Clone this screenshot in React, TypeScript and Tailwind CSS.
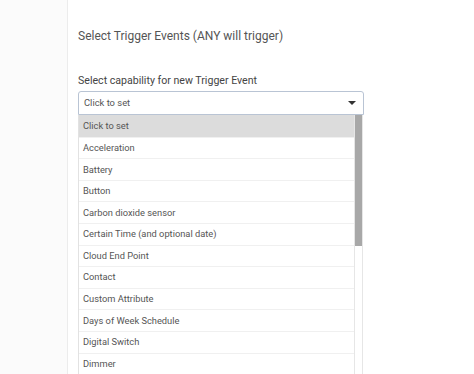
const options = [
  'Click to set',
  'Acceleration',
  'Battery',
  'Button',
  'Carbon dioxide sensor',
  'Certain Time (and optional date)',
  'Cloud End Point',
  'Contact',
  'Custom Attribute',
  'Days of Week Schedule',
  'Digital Switch',
  'Dimmer',
]

export default function App() {
  return (
    <div className="flex h-[374px] w-[474px] overflow-hidden bg-white font-['Roboto',sans-serif]">
      {/* Sidebar */}
      <div className="w-[68px] shrink-0 border-r border-[#ececec] bg-[#fbfbfb]" />

      {/* Content */}
      <div className="flex-1 pl-[10px]">
        <div className="pt-[28px] text-[12px] leading-[16px] text-[#555]">
          Select Trigger Events (ANY will trigger)
        </div>

        <div className="mt-[30px] text-[10.6px] leading-[14px] text-[#444]">
          Select capability for new Trigger Event
        </div>

        <div className="mt-[3px] w-[286px]">
          {/* Select box */}
          <div className="flex h-[24px] items-center justify-between rounded-t-[3px] border border-[#b9c4d4] px-[5px] text-[9.4px] text-[#555]">
            <span>Click to set</span>
            <svg width="8" height="4" viewBox="0 0 8 4" className="mr-[2px]">
              <path d="M0 0h8L4 4z" fill="#333" />
            </svg>
          </div>

          {/* Dropdown list */}
          <div className="flex w-[285px] border-l border-[#e2e2e2]">
            <div className="flex-1">
              {options.map((opt, i) => (
                <div
                  key={opt}
                  className={
                    i === 0
                      ? 'flex h-[21.6px] items-center bg-[#dcdcdc] px-[4px] text-[9.3px] text-[#555]'
                      : 'flex h-[21.6px] items-center border-t border-[#f0f0f0] bg-white px-[4px] text-[9.3px] text-[#555]'
                  }
                >
                  {opt}
                </div>
              ))}
            </div>
            {/* Scrollbar */}
            <div className="flex w-[9px] flex-col border-x border-[#e6e6e6] bg-white">
              <div className="h-[131px] bg-[#a8a8a8]" />
            </div>
          </div>
        </div>
      </div>
    </div>
  )
}
